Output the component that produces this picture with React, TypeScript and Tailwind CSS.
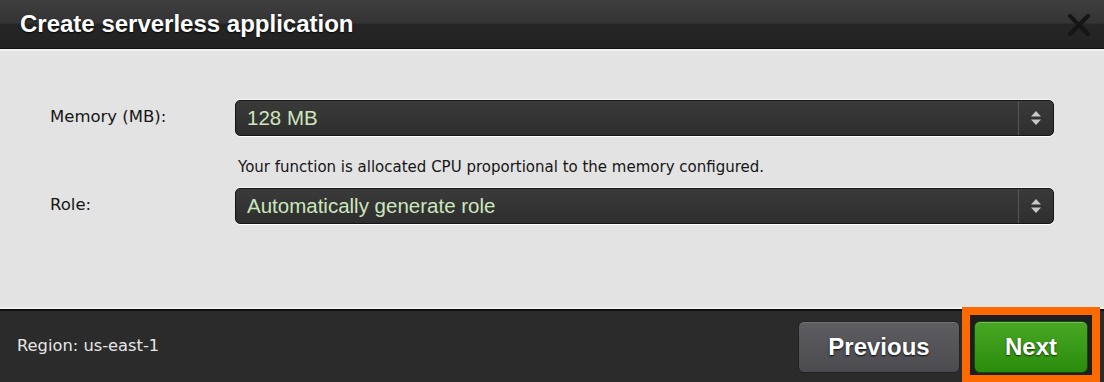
import React from "react";

function Arrows() {
  return (
    <svg width="12" height="16" viewBox="0 0 12 16" className="block">
      <path d="M6 1 L11 6.5 L1 6.5 Z" fill="#c8c8c8" />
      <path d="M6 15 L11 9.5 L1 9.5 Z" fill="#c8c8c8" />
    </svg>
  );
}

function Select({ value }: { value: string }) {
  return (
    <div className="flex-1 h-[36px] rounded-[5px] border border-[#151515] bg-[linear-gradient(#3a3a3a,#2e2e2e)] shadow-[0_1px_0_#ffffff,0_-1px_0_rgba(255,255,255,0.6)] flex items-stretch">
      <div className="flex-1 flex items-center pl-[11px] text-[20.5px] text-[#cde6bd] font-['Liberation_Sans',Arial,sans-serif]">
        {value}
      </div>
      <div className="w-[35px] border-l border-[#555] flex items-center justify-center">
        <Arrows />
      </div>
    </div>
  );
}

export default function App() {
  return (
    <div className="w-[1104px] h-[382px] overflow-hidden flex flex-col bg-[#e3e3e3]">
      {/* Header */}
      <div className="h-[48px] flex items-center justify-between pl-[20px] pr-[14px] bg-[linear-gradient(#3e3e3e_0%,#343434_48%,#252525_50%,#222222_100%)]">
        <div className="text-white font-bold text-[24px] font-['Liberation_Sans',Arial,sans-serif] [text-shadow:0_1px_2px_rgba(0,0,0,0.9)]">
          Create serverless application
        </div>
        <svg width="22" height="22" viewBox="0 0 22 22" className="mt-[2px]">
          <path d="M2 2 L20 20 M20 2 L2 20" stroke="#151515" strokeWidth="4" strokeLinecap="round" />
        </svg>
      </div>
      <div className="h-[1px] bg-[#111]" />
      <div className="h-[2px] bg-[#f2f2f2]" />
      {/* Body */}
      <div className="flex-1 flex flex-col pt-[49px] pl-[50px] pr-[50px] font-['DejaVu_Sans',Tahoma,sans-serif] text-[#161616]">
        <div className="flex items-center">
          <div className="w-[185px] text-[16.5px] -mt-[2px]">Memory (MB):</div>
          <Select value="128 MB" />
        </div>
        <div className="ml-[188px] mt-[23px] h-[17px] text-[15px] leading-[17px]">
          Your function is allocated CPU proportional to the memory configured.
        </div>
        <div className="flex items-center mt-[12px]">
          <div className="w-[185px] text-[16.5px] -mt-[2px]">Role:</div>
          <Select value="Automatically generate role" />
        </div>
      </div>
      <div className="h-[2px] bg-[#f0f0f0]" />
      <div className="h-[2px] bg-[#0e0e0e]" />
      {/* Footer */}
      <div className="h-[71px] bg-[#2b2b2b] flex items-center pl-[17px] pr-[16px]">
        <div className="flex-1 text-[#e6e6e6] text-[16.3px] font-['DejaVu_Sans',Tahoma,sans-serif]">
          Region: us-east-1
        </div>
        <button className="w-[162px] h-[52px] rounded-[6px] border border-[#222] bg-[linear-gradient(#5d5d62,#4a4a4f)] shadow-[inset_0_1px_0_rgba(255,255,255,0.15)] text-white font-bold text-[24px] font-['Liberation_Sans',Arial,sans-serif] [text-shadow:0_1px_2px_rgba(0,0,0,0.9)]">
          Previous
        </button>
        <div className="relative ml-[14px]">
          <div className="absolute left-[-12px] right-[-12px] top-[-14px] bottom-[-10px] border-[8px] border-[#ff6a00] bg-[#1e1e1e]" />
          <button className="relative w-[114px] h-[52px] rounded-[6px] border border-[#1a4a0a] bg-[linear-gradient(#48a824,#2a8c0c)] shadow-[inset_0_1px_0_rgba(255,255,255,0.25)] text-white font-bold text-[24px] font-['Liberation_Sans',Arial,sans-serif] [text-shadow:0_1px_2px_rgba(0,0,0,0.7)]">
            Next
          </button>
        </div>
      </div>
    </div>
  );
}
